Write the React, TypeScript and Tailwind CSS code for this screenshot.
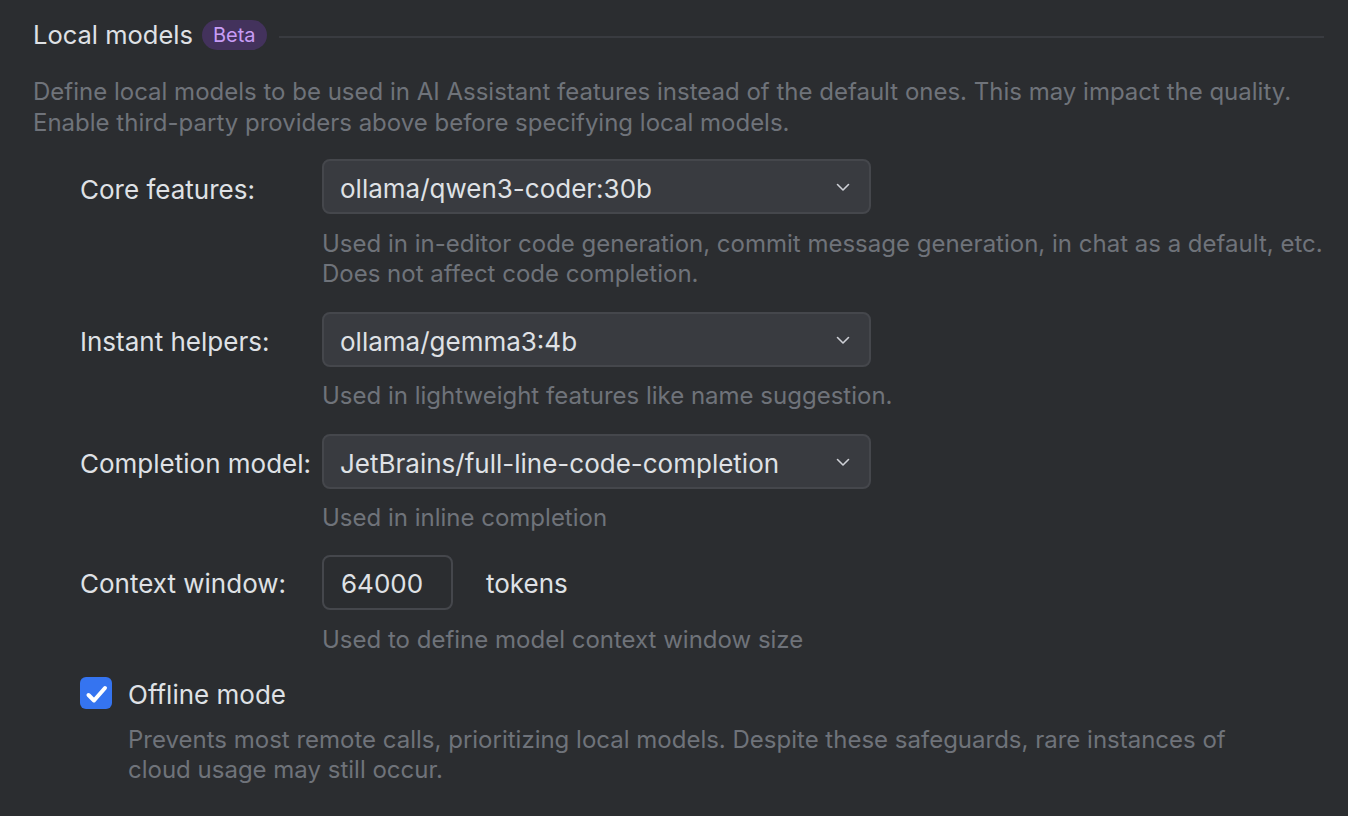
import React from "react";

const Chevron = () => (
  <svg width="18" height="18" viewBox="0 0 18 18" fill="none" className="shrink-0">
    <path d="M3.5 6.5 L9 12 L14.5 6.5" stroke="#ced0d6" strokeWidth="1.6" strokeLinecap="round" strokeLinejoin="round" />
  </svg>
);

function Combo({ value }: { value: string }) {
  return (
    <div className="w-[549px] h-[55px] rounded-[8px] border-2 border-[#45474c] bg-[#393b40] flex items-center justify-between pl-[16px] pr-[17px] text-[#dfe1e5]">
      <span className="pt-[4px]">{value}</span>
      <Chevron />
    </div>
  );
}

function Help({ children }: { children: React.ReactNode }) {
  return <div className="text-[#6f737a] text-[24px] leading-[30px]">{children}</div>;
}

export default function App() {
  return (
    <div
      className="w-[1348px] h-[816px] bg-[#2b2d30] text-[#dfe1e5] text-[26px] overflow-hidden"
      style={{ fontFamily: "Inter, 'Noto Sans', sans-serif" }}
    >
      <div className="pl-[33px] pr-[24px] pt-[18px]">
        <div className="flex items-center h-[34px]">
          <span className="text-[#dfe1e5] text-[25.5px]">Local models</span>
          <span className="ml-[9px] h-[30px] px-[11px] rounded-full bg-[#43325c] text-[#c79cf5] text-[20px] flex items-center">Beta</span>
          <div className="ml-[12px] mt-[4px] flex-1 h-[2px] bg-[#393b40]" />
        </div>
        <div className="mt-[24px] text-[#6f737a] text-[24px] leading-[31px]">
          Define local models to be used in AI Assistant features instead of the default ones. This may impact the quality.
          <br />
          Enable third-party providers above before specifying local models.
        </div>

        <div className="pl-[47px] mt-[21px] flex flex-col">
          <div className="flex items-center h-[55px]">
            <div className="w-[242px] pt-[5px]">Core features:</div>
            <Combo value="ollama/qwen3-coder:30b" />
          </div>
          <div className="pl-[242px] mt-[15px]">
            <Help>
              Used in in-editor code generation, commit message generation, in chat as a default, etc.
              <br />
              Does not affect code completion.
            </Help>
          </div>

          <div className="flex items-center h-[55px] mt-[23px]">
            <div className="w-[242px] pt-[3px]">Instant helpers:</div>
            <Combo value="ollama/gemma3:4b" />
          </div>
          <div className="pl-[242px] mt-[14px]">
            <Help>Used in lightweight features like name suggestion.</Help>
          </div>

          <div className="flex items-center h-[55px] mt-[23px]">
            <div className="w-[242px] pt-[3px]">Completion model:</div>
            <Combo value="JetBrains/full-line-code-completion" />
          </div>
          <div className="pl-[242px] mt-[14px]">
            <Help>Used in inline completion</Help>
          </div>

          <div className="flex items-center h-[55px] mt-[22px]">
            <div className="w-[242px] pt-[2px]">Context window:</div>
            <div className="w-[131px] h-[55px] rounded-[8px] border-2 border-[#45474c] bg-[#2b2d30] flex items-center pl-[17px] pt-[2px]">64000</div>
            <div className="ml-[33px] pt-[2px]">tokens</div>
          </div>
          <div className="pl-[242px] mt-[15px]">
            <Help>Used to define model context window size</Help>
          </div>

          <div className="flex items-center mt-[22px] h-[32px]">
            <div className="w-[32px] h-[32px] rounded-[6px] bg-[#3574f0] flex items-center justify-center">
              <svg width="32" height="32" viewBox="0 0 32 32" fill="none">
                <path d="M8.5 18 L14 23.5 L25 11" stroke="#ffffff" strokeWidth="4" strokeLinecap="round" strokeLinejoin="round" />
              </svg>
            </div>
            <div className="ml-[16px] pt-[2px]">Offline mode</div>
          </div>
          <div className="pl-[48px] mt-[16px]">
            <Help>
              Prevents most remote calls, prioritizing local models. Despite these safeguards, rare instances of
              <br />
              cloud usage may still occur.
            </Help>
          </div>
        </div>
      </div>
    </div>
  );
}
